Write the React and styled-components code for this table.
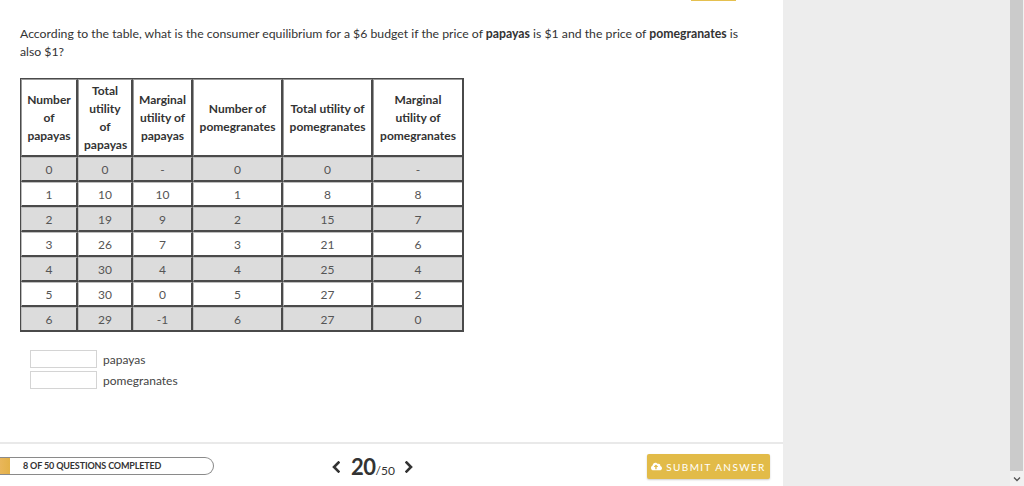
import React from "react";
import styled, { createGlobalStyle } from "styled-components";
import { FaCloudUploadAlt } from "react-icons/fa";

const GlobalStyle = createGlobalStyle`
  html, body {
    margin: 0;
    padding: 0;
    height: 486px;
    overflow: hidden;
    font-family: Lato, "Open Sans", sans-serif;
    color: #333;
  }
`;

const Page = styled.div`
  display: flex;
  width: 1024px;
  height: 486px;
`;

const Main = styled.div`
  width: 783px;
  display: flex;
  flex-direction: column;
  background: #fff;
`;

const TopMark = styled.div`
  margin-left: 691px;
  width: 45px;
  height: 1px;
  background: #e5c04f;
`;

const Content = styled.div`
  flex: 1;
  padding: 24px 20px 0 20px;
`;

const Question = styled.p`
  max-width: 722px;
  margin: 0 0 17px;
  font-size: 12.25px;
  line-height: 18px;
  color: #333;

  b {
    font-weight: 700;
  }
`;

const Table = styled.table`
  border-collapse: separate;
  border-spacing: 0;
  table-layout: fixed;
  width: 444px;
  border: 1px solid #4a4a4a;
  border-right-width: 2px;
  border-bottom-width: 2px;
  font-size: 12px;
`;

const Th = styled.th`
  height: 75px;
  padding: 0 5px;
  font-weight: 700;
  line-height: 18px;
  color: #333;
  text-align: center;
  vertical-align: middle;
  border-top: 1px solid #9a9a9a;
  border-left: 1px solid #9a9a9a;
  border-right: 2px solid #4a4a4a;
  border-bottom: 2px solid #4a4a4a;

  &:last-child {
    border-right: none;
  }
`;

const Td = styled.td`
  height: 22px;
  padding: 0;
  text-align: center;
  vertical-align: middle;
  color: #555;
  background: ${(p) => (p.$shade ? "#dcdcdc" : "#fff")};
  border-top: 1px solid #bdbdbd;
  border-left: 1px solid #bdbdbd;
  border-right: 2px solid #4a4a4a;
  border-bottom: 2px solid #4a4a4a;

  &:last-child {
    border-right: none;
  }

  tr:last-child & {
    border-bottom: none;
  }
`;

const Answers = styled.div`
  display: flex;
  flex-direction: column;
  gap: 3px;
  margin: 18px 0 0 10px;
`;

const AnswerRow = styled.label`
  display: flex;
  align-items: center;
  gap: 6px;
  font-size: 12px;
  color: #444;
`;

const AnswerInput = styled.input`
  width: 65px;
  height: 16px;
  padding: 0;
  border: 1px solid #d4d4d4;
  outline: none;
`;

const Footer = styled.div`
  height: 42px;
  border-top: 2px solid #e9e9e9;
  display: flex;
  align-items: center;
`;

const Progress = styled.div`
  width: 213px;
  height: 16px;
  margin-top: 1px;
  border: 1px solid #8a8a8a;
  border-left: none;
  border-radius: 0 9px 9px 0;
  display: flex;
  align-items: center;
  overflow: hidden;
`;

const ProgressFill = styled.div`
  width: 10px;
  height: 100%;
  background: linear-gradient(90deg, #e9b65a, #e3b148);
`;

const ProgressText = styled.span`
  margin-left: 13px;
  font-size: 9px;
  font-weight: 700;
  letter-spacing: -0.15px;
  color: #333;
`;

const Pager = styled.div`
  margin-left: 118px;
  display: flex;
  align-items: center;
  color: #333;
  margin-top: 3px;
`;

const Arrow = styled.span`
  display: flex;
  align-items: center;
`;

const PageNum = styled.span`
  margin: 0 10px 0 11px;
  font-size: 22px;
  font-weight: 700;
  letter-spacing: -0.5px;

  small {
    font-size: 12px;
    font-weight: 400;
    letter-spacing: 0;
  }
`;

const SubmitButton = styled.button`
  margin-left: auto;
  margin-right: 13px;
  margin-top: 3px;
  width: 123px;
  height: 25px;
  border: none;
  border-radius: 2px;
  background: #e2bb48;
  box-shadow: 0 1px 2px rgba(0, 0, 0, 0.2);
  color: #fff;
  font-family: Lato, sans-serif;
  font-size: 10px;
  letter-spacing: 1.4px;
  display: flex;
  align-items: center;
  justify-content: center;
  gap: 4px;
  padding: 0;
`;

const Side = styled.div`
  flex: 1;
  background: #ededed;
`;

const Scrollbar = styled.div`
  width: 14px;
  display: flex;
  flex-direction: column;
  background: #f1f1f1;
`;

const Thumb = styled.div`
  flex: 1;
  margin-right: 1px;
  background: #cbcbcb;
`;

const ScrollArrow = styled.div`
  height: 15px;
  display: flex;
  align-items: center;
  justify-content: center;
`;

const papayas = [
  ["0", "0", "-"],
  ["1", "10", "10"],
  ["2", "19", "9"],
  ["3", "26", "7"],
  ["4", "30", "4"],
  ["5", "30", "0"],
  ["6", "29", "-1"],
];
const pomegranates = [
  ["0", "0", "-"],
  ["1", "8", "8"],
  ["2", "15", "7"],
  ["3", "21", "6"],
  ["4", "25", "4"],
  ["5", "27", "2"],
  ["6", "27", "0"],
];

const headers = [
  "Number of papayas",
  "Total utility of papayas",
  "Marginal utility of papayas",
  "Number of pomegranates",
  "Total utility of pomegranates",
  "Marginal utility of pomegranates",
];
const widths = [57, 55, 60, 90, 90, 89];

function Chevron({ dir }) {
  const d = dir === "left" ? "M6.5 1.5 L2 6 L6.5 10.5" : "M1.5 1.5 L6 6 L1.5 10.5";
  return (
    <svg width="8" height="12" viewBox="0 0 8 12">
      <path d={d} fill="none" stroke="#333" strokeWidth="2.6" strokeLinecap="square" />
    </svg>
  );
}

export default function App() {
  return (
    <Page>
      <GlobalStyle />
      <Main>
        <TopMark />
        <Content>
          <Question>
            According to the table, what is the consumer equilibrium for a $6 budget if the price
            of <b>papayas</b> is $1 and the price of <b>pomegranates</b> is also $1?
          </Question>
          <Table>
            <colgroup>
              {widths.map((w, i) => (
                <col key={i} style={{ width: w }} />
              ))}
            </colgroup>
            <thead>
              <tr>
                {headers.map((h) => (
                  <Th key={h}>{h}</Th>
                ))}
              </tr>
            </thead>
            <tbody>
              {papayas.map((row, i) => (
                <tr key={i}>
                  {[...row, ...pomegranates[i]].map((v, j) => (
                    <Td key={j} $shade={i % 2 === 0}>
                      {v}
                    </Td>
                  ))}
                </tr>
              ))}
            </tbody>
          </Table>
          <Answers>
            <AnswerRow>
              <AnswerInput type="text" />
              papayas
            </AnswerRow>
            <AnswerRow>
              <AnswerInput type="text" />
              pomegranates
            </AnswerRow>
          </Answers>
        </Content>
        <Footer>
          <Progress>
            <ProgressFill />
            <ProgressText>8 OF 50 QUESTIONS COMPLETED</ProgressText>
          </Progress>
          <Pager>
            <Arrow>
              <Chevron dir="left" />
            </Arrow>
            <PageNum>
              20<small>/50</small>
            </PageNum>
            <Arrow>
              <Chevron dir="right" />
            </Arrow>
          </Pager>
          <SubmitButton>
            <FaCloudUploadAlt size={11} />
            SUBMIT ANSWER
          </SubmitButton>
        </Footer>
      </Main>
      <Side />
      <Scrollbar>
        <Thumb />
        <ScrollArrow>
          <svg width="8" height="6" viewBox="0 0 8 6">
            <path d="M1 1.5 L4 4.5 L7 1.5" fill="none" stroke="#555" strokeWidth="1.3" />
          </svg>
        </ScrollArrow>
      </Scrollbar>
    </Page>
  );
}
